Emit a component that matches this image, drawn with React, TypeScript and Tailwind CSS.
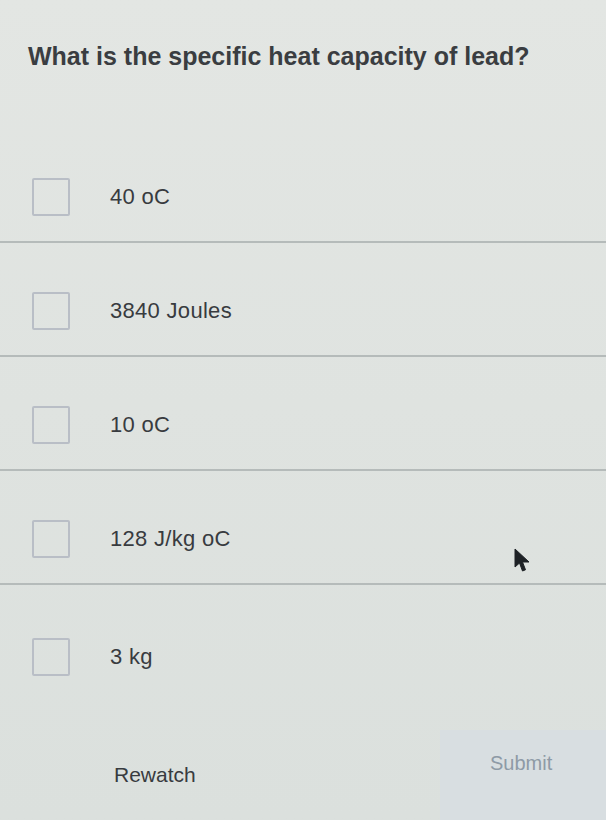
import React from "react";

const options = ["40 oC", "3840 Joules", "10 oC", "128 J/kg oC", "3 kg"];

export default function App() {
  return (
    <div className="relative w-[606px] h-[820px] overflow-hidden bg-gradient-to-b from-[#e3e6e3] via-[#dfe3e0] to-[#dbe0dd] font-['Liberation_Sans',Arial,sans-serif]">
      <h1 className="pl-[28px] pt-[41px] text-[25px] leading-[30px] font-bold text-[#3a3d41]">
        What is the specific heat capacity of lead?
      </h1>
      <div className="mt-[58px]">
        {options.map((o, i) => (
          <div
            key={o}
            className={
              i < options.length - 1
                ? "h-[114px] border-b-2 border-[#b5bbba] pt-[49px]"
                : "h-[114px] pt-[53px]"
            }
          >
            <div className="flex items-center pl-[32px]">
              <div className="w-[38px] h-[38px] border-2 border-[#b9bec6] rounded-[2px] shrink-0" />
              <span className="ml-[40px] text-[22px] leading-[26px] tracking-[0.3px] text-[#383b3f]">
                {o}
              </span>
            </div>
          </div>
        ))}
      </div>
      <div className="flex justify-between items-start">
        <span className="pl-[114px] pt-[64px] text-[21px] leading-[24px] text-[#383b3f]">
          Rewatch
        </span>
        <div className="w-[166px] h-[90px] mt-[31px] bg-[#d8dee1] pl-[50px] pt-[21px]">
          <span className="text-[20px] leading-[24px] text-[#8e9aa6]">Submit</span>
        </div>
      </div>
      <svg
        className="absolute left-[513px] top-[548px]"
        width="18"
        height="26"
        viewBox="0 0 18 26"
      >
        <path
          d="M2 1 L2 19 L6.5 15 L9.5 23 L12.5 21.8 L9.5 14 L16 14 Z"
          fill="#1e2226"
          stroke="#1e2226"
          strokeWidth="1"
          strokeLinejoin="round"
        />
      </svg>
    </div>
  );
}
